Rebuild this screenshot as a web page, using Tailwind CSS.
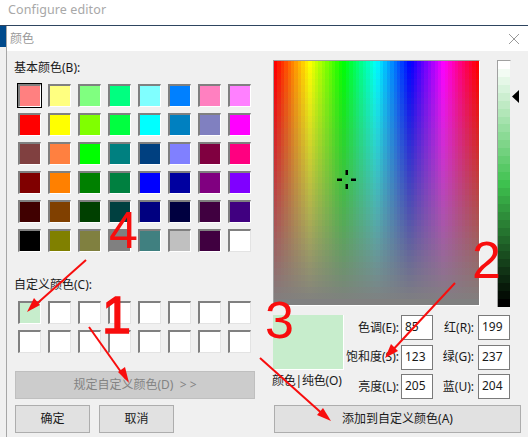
<!DOCTYPE html>
<html><head><meta charset="utf-8">
<script src="https://cdn.jsdelivr.net/npm/@tailwindcss/browser@4"></script>
</head>
<body class="m-0">
<div class="relative w-[528px] h-[437px] overflow-hidden bg-white text-[12px] leading-4 text-[#1a1a1a] font-['Noto_Sans','Noto_Sans_CJK_SC',sans-serif]">
  <div class="h-[26px] border-b border-[#2e4560] pl-2 pt-[1px] text-[12.5px] leading-[18px] tracking-[0.1px] text-[#a8a8a8]">Configure editor</div>
  <div class="flex h-[411px]">
    <div class="w-[6px] flex flex-col bg-[#f0f0f0]"><div class="h-[21px] bg-[#004a8c]"></div></div>
    <div class="flex-1 flex flex-col border-l border-[#a6a6a6]">
      <div class="h-[25px] bg-white flex items-center justify-between pl-[3px] pr-[8px] text-[#9a9a9a]">
        <span>颜色</span>
        <svg class="w-[12px] h-[12px]" viewBox="0 0 12 12"><path d="M1 1L11 11M11 1L1 11" stroke="#9a9a9a" stroke-width="1" fill="none"/></svg>
      </div>
      <div class="flex-1 bg-[#f0f0f0] flex">
        <div class="w-[266px] pl-[7px] flex flex-col">
          <div class="mt-[9px] h-4">基本颜色(B):</div>
          <div class="mt-[8px] ml-[4px] grid grid-cols-[repeat(8,23px)] gap-x-[7px] gap-y-[6px]">
            <div class="h-[23px] border-t-2 border-l-2 border-r border-b border-[#808080] border-r-white border-b-white bg-[#ff8080] outline outline-black outline-offset-0"></div>
            <div class="h-[23px] border-t-2 border-l-2 border-r border-b border-[#808080] border-r-white border-b-white bg-[#ffff80]"></div>
            <div class="h-[23px] border-t-2 border-l-2 border-r border-b border-[#808080] border-r-white border-b-white bg-[#80ff80]"></div>
            <div class="h-[23px] border-t-2 border-l-2 border-r border-b border-[#808080] border-r-white border-b-white bg-[#00ff80]"></div>
            <div class="h-[23px] border-t-2 border-l-2 border-r border-b border-[#808080] border-r-white border-b-white bg-[#80ffff]"></div>
            <div class="h-[23px] border-t-2 border-l-2 border-r border-b border-[#808080] border-r-white border-b-white bg-[#0080ff]"></div>
            <div class="h-[23px] border-t-2 border-l-2 border-r border-b border-[#808080] border-r-white border-b-white bg-[#ff80c0]"></div>
            <div class="h-[23px] border-t-2 border-l-2 border-r border-b border-[#808080] border-r-white border-b-white bg-[#ff80ff]"></div>
            <div class="h-[23px] border-t-2 border-l-2 border-r border-b border-[#808080] border-r-white border-b-white bg-[#ff0000]"></div>
            <div class="h-[23px] border-t-2 border-l-2 border-r border-b border-[#808080] border-r-white border-b-white bg-[#ffff00]"></div>
            <div class="h-[23px] border-t-2 border-l-2 border-r border-b border-[#808080] border-r-white border-b-white bg-[#80ff00]"></div>
            <div class="h-[23px] border-t-2 border-l-2 border-r border-b border-[#808080] border-r-white border-b-white bg-[#00ff40]"></div>
            <div class="h-[23px] border-t-2 border-l-2 border-r border-b border-[#808080] border-r-white border-b-white bg-[#00ffff]"></div>
            <div class="h-[23px] border-t-2 border-l-2 border-r border-b border-[#808080] border-r-white border-b-white bg-[#0080c0]"></div>
            <div class="h-[23px] border-t-2 border-l-2 border-r border-b border-[#808080] border-r-white border-b-white bg-[#8080c0]"></div>
            <div class="h-[23px] border-t-2 border-l-2 border-r border-b border-[#808080] border-r-white border-b-white bg-[#ff00ff]"></div>
            <div class="h-[23px] border-t-2 border-l-2 border-r border-b border-[#808080] border-r-white border-b-white bg-[#804040]"></div>
            <div class="h-[23px] border-t-2 border-l-2 border-r border-b border-[#808080] border-r-white border-b-white bg-[#ff8040]"></div>
            <div class="h-[23px] border-t-2 border-l-2 border-r border-b border-[#808080] border-r-white border-b-white bg-[#00ff00]"></div>
            <div class="h-[23px] border-t-2 border-l-2 border-r border-b border-[#808080] border-r-white border-b-white bg-[#008080]"></div>
            <div class="h-[23px] border-t-2 border-l-2 border-r border-b border-[#808080] border-r-white border-b-white bg-[#004080]"></div>
            <div class="h-[23px] border-t-2 border-l-2 border-r border-b border-[#808080] border-r-white border-b-white bg-[#8080ff]"></div>
            <div class="h-[23px] border-t-2 border-l-2 border-r border-b border-[#808080] border-r-white border-b-white bg-[#800040]"></div>
            <div class="h-[23px] border-t-2 border-l-2 border-r border-b border-[#808080] border-r-white border-b-white bg-[#ff0080]"></div>
            <div class="h-[23px] border-t-2 border-l-2 border-r border-b border-[#808080] border-r-white border-b-white bg-[#800000]"></div>
            <div class="h-[23px] border-t-2 border-l-2 border-r border-b border-[#808080] border-r-white border-b-white bg-[#ff8000]"></div>
            <div class="h-[23px] border-t-2 border-l-2 border-r border-b border-[#808080] border-r-white border-b-white bg-[#008000]"></div>
            <div class="h-[23px] border-t-2 border-l-2 border-r border-b border-[#808080] border-r-white border-b-white bg-[#008040]"></div>
            <div class="h-[23px] border-t-2 border-l-2 border-r border-b border-[#808080] border-r-white border-b-white bg-[#0000ff]"></div>
            <div class="h-[23px] border-t-2 border-l-2 border-r border-b border-[#808080] border-r-white border-b-white bg-[#0000a0]"></div>
            <div class="h-[23px] border-t-2 border-l-2 border-r border-b border-[#808080] border-r-white border-b-white bg-[#800080]"></div>
            <div class="h-[23px] border-t-2 border-l-2 border-r border-b border-[#808080] border-r-white border-b-white bg-[#8000ff]"></div>
            <div class="h-[23px] border-t-2 border-l-2 border-r border-b border-[#808080] border-r-white border-b-white bg-[#400000]"></div>
            <div class="h-[23px] border-t-2 border-l-2 border-r border-b border-[#808080] border-r-white border-b-white bg-[#804000]"></div>
            <div class="h-[23px] border-t-2 border-l-2 border-r border-b border-[#808080] border-r-white border-b-white bg-[#004000]"></div>
            <div class="h-[23px] border-t-2 border-l-2 border-r border-b border-[#808080] border-r-white border-b-white bg-[#004040]"></div>
            <div class="h-[23px] border-t-2 border-l-2 border-r border-b border-[#808080] border-r-white border-b-white bg-[#000080]"></div>
            <div class="h-[23px] border-t-2 border-l-2 border-r border-b border-[#808080] border-r-white border-b-white bg-[#000040]"></div>
            <div class="h-[23px] border-t-2 border-l-2 border-r border-b border-[#808080] border-r-white border-b-white bg-[#400040]"></div>
            <div class="h-[23px] border-t-2 border-l-2 border-r border-b border-[#808080] border-r-white border-b-white bg-[#400080]"></div>
            <div class="h-[23px] border-t-2 border-l-2 border-r border-b border-[#808080] border-r-white border-b-white bg-[#000000]"></div>
            <div class="h-[23px] border-t-2 border-l-2 border-r border-b border-[#808080] border-r-white border-b-white bg-[#808000]"></div>
            <div class="h-[23px] border-t-2 border-l-2 border-r border-b border-[#808080] border-r-white border-b-white bg-[#808040]"></div>
            <div class="h-[23px] border-t-2 border-l-2 border-r border-b border-[#808080] border-r-white border-b-white bg-[#808080]"></div>
            <div class="h-[23px] border-t-2 border-l-2 border-r border-b border-[#808080] border-r-white border-b-white bg-[#408080]"></div>
            <div class="h-[23px] border-t-2 border-l-2 border-r border-b border-[#808080] border-r-white border-b-white bg-[#c0c0c0]"></div>
            <div class="h-[23px] border-t-2 border-l-2 border-r border-b border-[#808080] border-r-white border-b-white bg-[#400040]"></div>
            <div class="h-[23px] border-t-2 border-l-2 border-r border-b border-[#808080] border-r-[#e3e3e3] border-b-[#e3e3e3] bg-[#ffffff]"></div>
          </div>
          <div class="mt-[25px] h-4">自定义颜色(C):</div>
          <div class="mt-[8px] ml-[4px] grid grid-cols-[repeat(8,23px)] gap-x-[7px] gap-y-[6px]">
            <div class="h-[23px] border-t-2 border-l-2 border-r border-b border-[#808080] border-r-white border-b-white bg-[#c7edcc]"></div>
            <div class="h-[23px] border-t-2 border-l-2 border-r border-b border-[#808080] border-r-[#e3e3e3] border-b-[#e3e3e3] bg-white"></div>
            <div class="h-[23px] border-t-2 border-l-2 border-r border-b border-[#808080] border-r-[#e3e3e3] border-b-[#e3e3e3] bg-white"></div>
            <div class="h-[23px] border-t-2 border-l-2 border-r border-b border-[#808080] border-r-[#e3e3e3] border-b-[#e3e3e3] bg-white"></div>
            <div class="h-[23px] border-t-2 border-l-2 border-r border-b border-[#808080] border-r-[#e3e3e3] border-b-[#e3e3e3] bg-white"></div>
            <div class="h-[23px] border-t-2 border-l-2 border-r border-b border-[#808080] border-r-[#e3e3e3] border-b-[#e3e3e3] bg-white"></div>
            <div class="h-[23px] border-t-2 border-l-2 border-r border-b border-[#808080] border-r-[#e3e3e3] border-b-[#e3e3e3] bg-white"></div>
            <div class="h-[23px] border-t-2 border-l-2 border-r border-b border-[#808080] border-r-[#e3e3e3] border-b-[#e3e3e3] bg-white"></div>
            <div class="h-[23px] border-t-2 border-l-2 border-r border-b border-[#808080] border-r-[#e3e3e3] border-b-[#e3e3e3] bg-white"></div>
            <div class="h-[23px] border-t-2 border-l-2 border-r border-b border-[#808080] border-r-[#e3e3e3] border-b-[#e3e3e3] bg-white"></div>
            <div class="h-[23px] border-t-2 border-l-2 border-r border-b border-[#808080] border-r-[#e3e3e3] border-b-[#e3e3e3] bg-white"></div>
            <div class="h-[23px] border-t-2 border-l-2 border-r border-b border-[#808080] border-r-[#e3e3e3] border-b-[#e3e3e3] bg-white"></div>
            <div class="h-[23px] border-t-2 border-l-2 border-r border-b border-[#808080] border-r-[#e3e3e3] border-b-[#e3e3e3] bg-white"></div>
            <div class="h-[23px] border-t-2 border-l-2 border-r border-b border-[#808080] border-r-[#e3e3e3] border-b-[#e3e3e3] bg-white"></div>
            <div class="h-[23px] border-t-2 border-l-2 border-r border-b border-[#808080] border-r-[#e3e3e3] border-b-[#e3e3e3] bg-white"></div>
            <div class="h-[23px] border-t-2 border-l-2 border-r border-b border-[#808080] border-r-[#e3e3e3] border-b-[#e3e3e3] bg-white"></div>
          </div>
          <div class="mt-[18px] ml-[1px] w-[240px] h-[28px] flex items-center justify-center bg-[#cccccc] border border-[#bfbfbf] text-[#838383] whitespace-pre">规定自定义颜色(D)  &gt; &gt;</div>
          <div class="mt-[6px] ml-[1px] flex gap-[9px]">
            <div class="w-[75px] h-[28px] flex items-center justify-center bg-[#e1e1e1] border border-[#adadad]">确定</div>
            <div class="w-[75px] h-[28px] flex items-center justify-center bg-[#e1e1e1] border border-[#adadad]">取消</div>
          </div>
        </div>
        <div class="flex flex-col">
          <div class="mt-[9px] flex">
            <div id="spectrum" class="relative w-[207px] h-[246px] border-t border-l border-[#a0a0a0] border-r border-b border-r-white border-b-white bg-[linear-gradient(to_bottom,rgba(128,128,128,0),#808080),linear-gradient(to_right,#f00,#ff0,#0f0,#0ff,#00f,#f0f,#f00)]">
              <svg class="absolute left-[63px] top-[109px] w-[20px] h-[20px]" viewBox="0 0 20 20"><path d="M8.500 0h2.500v5h-2.500zM8.500 14h2.500v5h-2.500zM0 8.500h5v2.500h-5zM14 8.500h5v2.500h-5z" fill="#000"/></svg>
            </div>
            <div id="lum" class="ml-[17px] w-[14px] h-[247px] border-t border-l border-r border-[#a0a0a0] border-r-[#f0f0f0] bg-[linear-gradient(to_bottom,#fff,#3ec14e_50%,#000)]"></div>
            <svg class="ml-[1px] mt-[30px] w-[8px] h-[13px]" viewBox="0 0 8 13"><path d="M7 0v13L0 6.500z" fill="#000"/></svg>
          </div>
          <div class="mt-[8px] flex">
            <div class="w-[71px] flex flex-col">
              <div class="h-[55px] bg-[#c7edcc] border-r border-b border-white"></div>
              <div class="mt-[3px] -ml-[1px] h-4 whitespace-nowrap tracking-[-0.2px]">颜色|纯色(O)</div>
            </div>
            <div class="ml-[10px] grid grid-cols-[47px_32px_45px_32px] grid-rows-[25px_25px_25px] gap-y-[4.500px] items-center text-right">
              <div class="whitespace-nowrap pr-[2px] flex justify-end">色调(E):</div>
              <div class="h-full bg-white border border-[#7a7a7a] pl-[3px] pt-[3px] text-left">85</div>
              <div class="whitespace-nowrap pr-[4px] flex justify-end">红(R):</div>
              <div class="h-full bg-white border border-[#7a7a7a] pl-[3px] pt-[3px] text-left">199</div>
              <div class="whitespace-nowrap pr-[2px] flex justify-end">饱和度(S):</div>
              <div class="h-full bg-white border border-[#7a7a7a] pl-[3px] pt-[3px] text-left">123</div>
              <div class="whitespace-nowrap pr-[4px] flex justify-end">绿(G):</div>
              <div class="h-full bg-white border border-[#7a7a7a] pl-[3px] pt-[3px] text-left">237</div>
              <div class="whitespace-nowrap pr-[2px] flex justify-end">亮度(L):</div>
              <div class="h-full bg-white border border-[#7a7a7a] pl-[3px] pt-[3px] text-left">205</div>
              <div class="whitespace-nowrap pr-[4px] flex justify-end">蓝(U):</div>
              <div class="h-full bg-white border border-[#7a7a7a] pl-[3px] pt-[3px] text-left">204</div>
            </div>
          </div>
          <div class="mt-[6px] ml-[1px] w-[247px] h-[28px] flex items-center justify-center bg-[#e1e1e1] border border-[#adadad]">添加到自定义颜色(A)</div>
        </div>
      </div>
    </div>
  </div>
  <svg class="absolute inset-0 w-[528px] h-[437px] pointer-events-none" viewBox="0 0 528 437">
    <g stroke="#f80d0d" stroke-width="2" fill="none">
      <path d="M86 260L32 308"/>
      <path d="M89 327L126 379"/>
      <path d="M455 283L390 353"/>
      <path d="M260 358L326 417"/>
    </g>
    <g fill="#f80d0d">
      <path d="M27 312L34 298L40 305z"/>
      <path d="M129 383L118 372L125 367z"/>
      <path d="M385 358L391 344L398 351z"/>
      <path d="M331 421L317 415L323 408z"/>
    </g>
  </svg>
  <div class="absolute left-[102px] top-[286px] text-[52px] leading-[58px] text-[#f80d0d] [-webkit-text-stroke:1.5px_#f80d0d] font-['Liberation_Sans',sans-serif]">1</div>
  <div class="absolute left-[472px] top-[231px] text-[52px] leading-[58px] text-[#f80d0d] font-['Liberation_Sans',sans-serif]">2</div>
  <div class="absolute left-[265px] top-[291px] text-[52px] leading-[58px] text-[#f80d0d] font-['Liberation_Sans',sans-serif]">3</div>
  <div class="absolute left-[109px] top-[201px] text-[52px] leading-[58px] text-[#f80d0d] font-['Liberation_Sans',sans-serif]">4</div>
</div>
<script>
function hsl(h,s,l){var c=(1-Math.abs(2*l-1))*s,x=c*(1-Math.abs((h/60)%2-1)),m=l-c/2,r,g,b;
 if(h<60){r=c;g=x;b=0}else if(h<120){r=x;g=c;b=0}else if(h<180){r=0;g=c;b=x}else if(h<240){r=0;g=x;b=c}else if(h<300){r=x;g=0;b=c}else{r=c;g=0;b=x}
 return 'rgb('+Math.round((r+m)*255)+','+Math.round((g+m)*255)+','+Math.round((b+m)*255)+')';}
var hs=[],vs=[],ls=[],n=60,k=40,t=31;
for(var i=0;i<n;i++){var p=i/n*100,q=(i+1)/n*100;var col=hsl(i/(n-1)*359.9,1,.5);hs.push(col+' '+p+'%',col+' '+q+'%');}
for(var j=0;j<k;j++){var a=j/(k-1);var cc='rgba(128,128,128,'+a+')';vs.push(cc+' '+(j/k*100)+'%',cc+' '+((j+1)/k*100)+'%');}
for(var e=0;e<t;e++){var L=1-e/(t-1);var cl=hsl(127.5,.51,L);ls.push(cl+' '+(e/t*100)+'%',cl+' '+((e+1)/t*100)+'%');}
document.getElementById('spectrum').style.backgroundImage='linear-gradient(to bottom,'+vs.join(',')+'),linear-gradient(to right,'+hs.join(',')+')';
document.getElementById('lum').style.backgroundImage='linear-gradient(to bottom,'+ls.join(',')+')';
</script>
</body></html>
